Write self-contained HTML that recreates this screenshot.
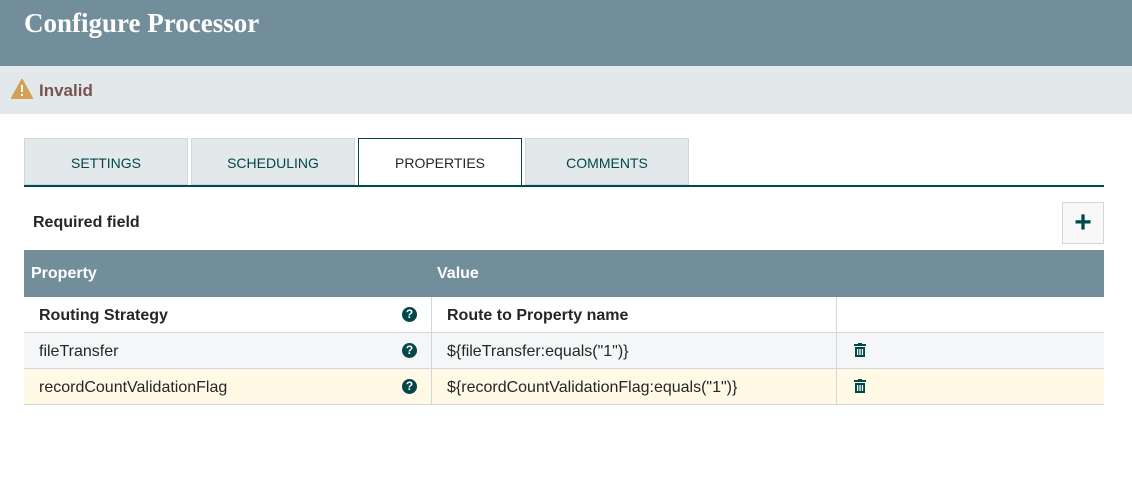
<!DOCTYPE html>
<html><head><style>
body{margin:0;width:1132px;height:487px;background:#fff;font-family:"Liberation Sans",sans-serif;position:relative;overflow:hidden}
.hdr{position:absolute;left:0;top:0;width:1132px;height:66px;background:#728e9b}
.hdr span{position:absolute;left:24px;top:8px;color:#fff;font:bold 27px "Liberation Serif",serif}
.inv{position:absolute;left:0;top:66px;width:1132px;height:48px;background:#e3e8eb}
.inv span{position:absolute;left:39px;top:15px;color:#775351;font-size:17px;font-weight:bold}
.tab{position:absolute;top:138px;width:164px;height:47px;background:#e3e8eb;border:1px solid #cfd9db;box-sizing:border-box;text-align:center;line-height:49px;font-size:14px;color:#004849}
.tab.a{background:#fff;border-color:#004849;color:#262626;height:48px}
.line{position:absolute;left:24px;top:185px;width:1080px;height:2px;background:#004849}
.req{position:absolute;left:33px;top:214px;font-size:16px;font-weight:bold;color:#262626}
.plus{position:absolute;left:1062px;top:202px;width:40px;height:40px;border:1px solid #cfd9db;background:#f8f8f8;color:#004849;font-size:30px;font-weight:bold;text-align:center;line-height:40px}
.th{position:absolute;left:24px;top:250px;width:1080px;height:47px;background:#728e9b;color:#fff;font-weight:bold;font-size:16px}
.row{position:absolute;left:24px;width:1080px;height:36px;border-bottom:1px solid #cfd9db;font-size:16px;color:#262626;box-sizing:border-box}
.row div{position:absolute;top:0;height:35px;line-height:37px}
.c1{left:15px}.c2{left:407px;border-left:1px solid #cfd9db;padding-left:15px;width:390px}.c3{left:812px;border-left:1px solid #cfd9db;width:268px}
.q{position:absolute;left:378px;top:10px;width:15px;height:15px;border-radius:50%;background:#004849;color:#fff;font-size:12px;font-weight:bold;text-align:center;line-height:15px}
.tr{position:absolute;left:17px;top:10px}
</style></head><body>
<div class="hdr"><span>Configure Processor</span></div>
<div class="inv"><svg style="position:absolute;left:11px;top:13px" width="22" height="20" viewBox="0 0 22 20"><path d="M11 1L21 19H1Z" fill="#d3a055" stroke="#d3a055" stroke-linejoin="round" stroke-width="2"/><rect x="10" y="6" width="2" height="7" fill="#fff"/><rect x="10" y="15" width="2" height="2" fill="#fff"/></svg><span>Invalid</span></div>
<div class="tab" style="left:24px">SETTINGS</div>
<div class="tab" style="left:191px">SCHEDULING</div>
<div class="tab a" style="left:358px">PROPERTIES</div>
<div class="tab" style="left:525px">COMMENTS</div>
<div class="line"></div>
<div class="req">Required field</div>
<div class="plus">+</div>
<div class="th"><span style="position:absolute;left:7px;top:15px">Property</span><span style="position:absolute;left:413px;top:15px">Value</span></div>
<div class="row" style="top:297px;background:#fff;font-weight:bold"><div class="c1">Routing Strategy</div><span class="q">?</span><div class="c2">Route to Property name</div><div class="c3"></div></div>
<div class="row" style="top:333px;background:#f4f6f7"><div class="c1">fileTransfer</div><span class="q">?</span><div class="c2">${fileTransfer:equals("1")}</div><div class="c3"><svg class="tr" width="12" height="14" viewBox="0 0 12 14"><rect x="0" y="1" width="12" height="2" fill="#004849"/><rect x="4" y="0" width="4" height="2" fill="#004849"/><path d="M1 4h10v10H1z" fill="#004849"/><rect x="3" y="6" width="1.3" height="6" fill="#fff"/><rect x="5.4" y="6" width="1.3" height="6" fill="#fff"/><rect x="7.8" y="6" width="1.3" height="6" fill="#fff"/></svg></div></div>
<div class="row" style="top:369px;background:#fff9e5"><div class="c1">recordCountValidationFlag</div><span class="q">?</span><div class="c2">${recordCountValidationFlag:equals("1")}</div><div class="c3"><svg class="tr" width="12" height="14" viewBox="0 0 12 14"><rect x="0" y="1" width="12" height="2" fill="#004849"/><rect x="4" y="0" width="4" height="2" fill="#004849"/><path d="M1 4h10v10H1z" fill="#004849"/><rect x="3" y="6" width="1.3" height="6" fill="#fff"/><rect x="5.4" y="6" width="1.3" height="6" fill="#fff"/><rect x="7.8" y="6" width="1.3" height="6" fill="#fff"/></svg></div></div>
</body></html>
